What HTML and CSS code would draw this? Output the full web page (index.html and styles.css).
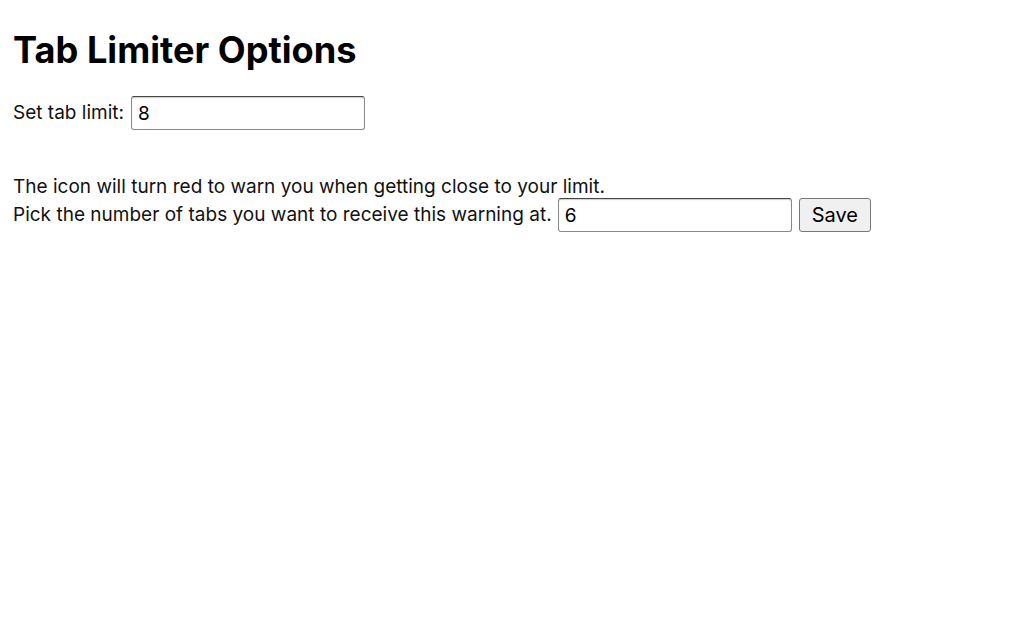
FILE: index.html
```html
<!DOCTYPE html>
<html>
<head>
<meta charset="utf-8">
<title>Tab Limiter Options</title>
<link rel="stylesheet" href="styles.css">
</head>
<body>
<h1 class="title">Tab Limiter Options</h1>
<div class="row row-limit">
  <label class="label" for="limit">Set tab limit:</label>
  <input class="field" id="limit" type="text" value="8">
</div>
<div class="warn">
  <p class="line">The icon will turn red to warn you when getting close to your limit.</p>
  <div class="row">
    <label class="label" for="warnAt">Pick the number of tabs you want to receive this warning at.</label>
    <input class="field" id="warnAt" type="text" value="6">
    <button class="save" type="button">Save</button>
  </div>
</div>
</body>
</html>
```

FILE: styles.css
```css
html, body {
  background: #fff;
}
body {
  margin: 0;
  padding: 0 13px;
  font-family: Inter, "Noto Sans", sans-serif;
  font-size: 19px;
  letter-spacing: 0.01px;
  color: #111;
}
.title {
  margin: 30px 0 26px;
  font-size: 36.2px;
  font-weight: 700;
  line-height: 40px;
  letter-spacing: 0;
  color: #000;
}
.row {
  display: flex;
  align-items: center;
  gap: 6px;
}
.row-limit {
  gap: 7px;
}
.label {
  line-height: 22px;
}
.field {
  box-sizing: border-box;
  width: 234px;
  height: 34px;
  margin: 0;
  padding: 2px 6px;
  font-family: inherit;
  font-size: 19px;
  color: #000;
  border: 1px solid #8a8a8a;
  border-top-color: #444;
  border-radius: 3px;
  box-shadow: inset 0 1px 1px rgba(0,0,0,0.2);
  background: #fff;
}
.warn {
  margin-top: 46px;
}
.line {
  margin: 0;
  line-height: 22px;
}
.save {
  box-sizing: border-box;
  height: 34px;
  margin-left: 1px;
  padding: 0 12px;
  font-family: inherit;
  font-size: 20px;
  letter-spacing: 0;
  color: #000;
  background: #f0f0f0;
  border: 1px solid #777;
  border-radius: 3px;
}
```
